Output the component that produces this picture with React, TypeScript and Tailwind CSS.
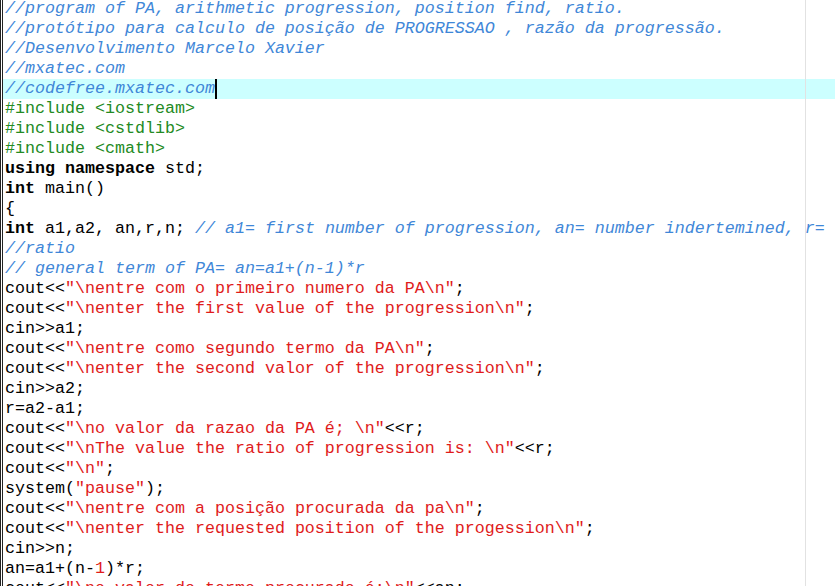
import React from "react";

type Seg = [string, string];

const C = "text-[#3f87d8] italic";
const S = "text-[#e01b1b]";
const P = "text-[#238a23]";
const K = "font-bold text-black";
const N = "text-black";
const D = "text-[#e01b1b]";

const lines: Seg[][] = [
  [["//program of PA, arithmetic progression, position find, ratio.", C]],
  [["//protótipo para calculo de posição de PROGRESSAO , razão da progressão.", C]],
  [["//Desenvolvimento Marcelo Xavier", C]],
  [["//mxatec.com", C]],
  [["//codefree.mxatec.com", C]],
  [["#include <iostream>", P]],
  [["#include <cstdlib>", P]],
  [["#include <cmath>", P]],
  [["using", K], [" ", N], ["namespace", K], [" std;", N]],
  [["int", K], [" main()", N]],
  [["{", N]],
  [["int", K], [" a1,a2, an,r,n; ", N], ["// a1= first number of progression, an= number indertemined, r=", C]],
  [["//ratio", C]],
  [["// general term of PA= an=a1+(n-1)*r", C]],
  [["cout<<", N], ["\"\\nentre com o primeiro numero da PA\\n\"", S], [";", N]],
  [["cout<<", N], ["\"\\nenter the first value of the progression\\n\"", S], [";", N]],
  [["cin>>a1;", N]],
  [["cout<<", N], ["\"\\nentre como segundo termo da PA\\n\"", S], [";", N]],
  [["cout<<", N], ["\"\\nenter the second valor of the progression\\n\"", S], [";", N]],
  [["cin>>a2;", N]],
  [["r=a2-a1;", N]],
  [["cout<<", N], ["\"\\no valor da razao da PA é; \\n\"", S], ["<<r;", N]],
  [["cout<<", N], ["\"\\nThe value the ratio of progression is: \\n\"", S], ["<<r;", N]],
  [["cout<<", N], ["\"\\n\"", S], [";", N]],
  [["system(", N], ["\"pause\"", S], [");", N]],
  [["cout<<", N], ["\"\\nentre com a posição procurada da pa\\n\"", S], [";", N]],
  [["cout<<", N], ["\"\\nenter the requested position of the progession\\n\"", S], [";", N]],
  [["cin>>n;", N]],
  [["an=a1+(n-", N], ["1", D], [")*r;", N]],
  [["cout<<", N], ["\"\\no valor do termo procurado é:\\n\"", S], ["<<an;", N]],
];

export default function App() {
  return (
    <div className="relative h-[586px] w-[835px] overflow-hidden bg-white">
      <div className="flex h-full">
        <div className="w-px bg-[#222]" />
        <div className="w-px bg-white" />
        <div className="w-px bg-[#222]" />
        <div
          className="mt-[-1px] flex-1 text-[16.66px] leading-[20px] whitespace-pre"
          style={{ fontFamily: '"Liberation Mono", "Courier New", monospace' }}
        >
          {lines.map((segs, i) => (
            <div key={i} className={`h-[20px] pl-[2px] ${i === 4 ? "bg-[#ccffff]" : ""}`}>
              {segs.map(([t, c], j) => (
                <span key={j} className={c}>
                  {t}
                </span>
              ))}
              {i === 4 && <span className="inline-block h-[20px] w-[2px] bg-black align-top" />}
            </div>
          ))}
        </div>
      </div>
      <div className="absolute top-0 left-[805px] h-full w-px bg-[#e2e2e2]" />
    </div>
  );
}
